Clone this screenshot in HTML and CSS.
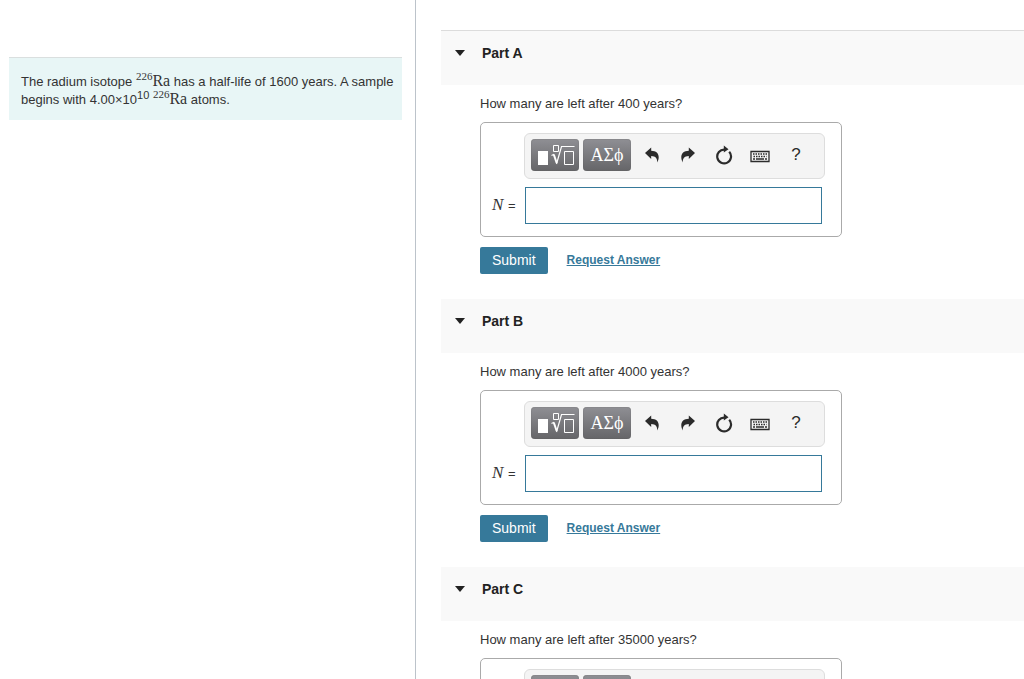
FILE: index.html
```
<!DOCTYPE html>
<html lang="en">
<head>
  <meta charset="utf-8">
  <meta name="viewport" content="width=device-width, initial-scale=1.0">
  <title>Radium half-life</title>
  <link rel="stylesheet" href="styles.css">
</head>
<body>

  <!-- shared icons -->
  <svg class="sprite" aria-hidden="true">
    <symbol id="i-template" viewBox="0 0 48 32">
      <path d="M7 12h10v14H7z" fill="#fff"/>
      <path d="M22.5 6.500h5v6h-5zM33.500 12.500h9v13h-9z" fill="none" stroke="#fff"/>
      <path d="M20.500 16.500l2.500-1.200M25.500 25l5-17.500H43.500" fill="none" stroke="#fff" stroke-width="1.200"/>
      <path d="M22.800 15.500l2.900 8.500" fill="none" stroke="#fff" stroke-width="2"/>
    </symbol>
    <symbol id="i-undo" viewBox="0 0 16 16">
      <path d="M1 6L7.200.5v3.200c4.900.2 7.600 2.600 7.500 6.600 0 1.700-.4 3.300-1.500 5.200.2-4.200-1.500-6.300-6-6.500v3z"/>
    </symbol>
    <symbol id="i-redo" viewBox="0 0 16 16">
      <path d="M15 6L8.800.5v3.200C3.900 3.900 1.200 6.300 1.300 10.300c0 1.700.4 3.300 1.500 5.200-.2-4.200 1.500-6.300 6-6.500v3z"/>
    </symbol>
    <symbol id="i-reset" viewBox="0 0 18 20">
      <path d="M14.200 6.800A6.900 6.900 0 1 1 9.500 4.600" fill="none" stroke="currentColor" stroke-width="2.200"/>
      <path d="M8.800.5L13.500 4.300 8.800 7.500z"/>
    </symbol>
    <symbol id="i-keyboard" viewBox="0 0 20 14">
      <path d="M1 1.500h18v10H1z" fill="none" stroke="currentColor" stroke-width="1.300"/>
      <path d="M3 4h14M3.500 6.500h13" fill="none" stroke="currentColor" stroke-width="1.500" stroke-dasharray="1.500 1"/>
      <path d="M3 9h2M6 9h8M15 9h2" fill="none" stroke="currentColor" stroke-width="1.500"/>
    </symbol>
  </svg>

  <div class="page">
    <aside class="intro">
      <p class="problem">The radium isotope <span class="tex"><sup>226</sup>Ra</span> has a half-life of 1600 years. A sample begins with 4.00×10<sup>10</sup> <span class="tex"><sup>226</sup>Ra</span> atoms.</p>
    </aside>

    <main class="parts">
      <section class="part">
        <h2 class="part-title"><button class="toggle" type="button" aria-expanded="true">Part A</button></h2>
        <form class="part-body">
          <p class="question">How many are left after 400 years?</p>
          <div class="answer">
            <div class="toolbar">
              <button class="key" type="button" aria-label="Templates"><svg><use href="#i-template"/></svg></button>
              <button class="key" type="button">ΑΣϕ</button>
              <span class="tools">
                <button class="tool" type="button" aria-label="Undo"><svg width="16" height="16"><use href="#i-undo"/></svg></button>
                <button class="tool" type="button" aria-label="Redo"><svg width="16" height="16"><use href="#i-redo"/></svg></button>
                <button class="tool" type="button" aria-label="Reset"><svg width="18" height="20"><use href="#i-reset"/></svg></button>
                <button class="tool" type="button" aria-label="Keyboard shortcuts"><svg class="low" width="20" height="14"><use href="#i-keyboard"/></svg></button>
                <button class="tool" type="button" aria-label="Help">?</button>
              </span>
            </div>
            <label class="symbol" for="answer-a"><i>N</i> =</label>
            <input class="field" id="answer-a" type="text">
          </div>
          <div class="actions">
            <button class="submit" type="submit">Submit</button>
            <a class="request" href="#">Request Answer</a>
          </div>
        </form>
      </section>

      <section class="part">
        <h2 class="part-title"><button class="toggle" type="button" aria-expanded="true">Part B</button></h2>
        <form class="part-body">
          <p class="question">How many are left after 4000 years?</p>
          <div class="answer">
            <div class="toolbar">
              <button class="key" type="button" aria-label="Templates"><svg><use href="#i-template"/></svg></button>
              <button class="key" type="button">ΑΣϕ</button>
              <span class="tools">
                <button class="tool" type="button" aria-label="Undo"><svg width="16" height="16"><use href="#i-undo"/></svg></button>
                <button class="tool" type="button" aria-label="Redo"><svg width="16" height="16"><use href="#i-redo"/></svg></button>
                <button class="tool" type="button" aria-label="Reset"><svg width="18" height="20"><use href="#i-reset"/></svg></button>
                <button class="tool" type="button" aria-label="Keyboard shortcuts"><svg class="low" width="20" height="14"><use href="#i-keyboard"/></svg></button>
                <button class="tool" type="button" aria-label="Help">?</button>
              </span>
            </div>
            <label class="symbol" for="answer-b"><i>N</i> =</label>
            <input class="field" id="answer-b" type="text">
          </div>
          <div class="actions">
            <button class="submit" type="submit">Submit</button>
            <a class="request" href="#">Request Answer</a>
          </div>
        </form>
      </section>

      <section class="part">
        <h2 class="part-title"><button class="toggle" type="button" aria-expanded="true">Part C</button></h2>
        <form class="part-body">
          <p class="question">How many are left after 35000 years?</p>
          <div class="answer">
            <div class="toolbar">
              <button class="key" type="button" aria-label="Templates"><svg><use href="#i-template"/></svg></button>
              <button class="key" type="button">ΑΣϕ</button>
              <span class="tools">
                <button class="tool" type="button" aria-label="Undo"><svg width="16" height="16"><use href="#i-undo"/></svg></button>
                <button class="tool" type="button" aria-label="Redo"><svg width="16" height="16"><use href="#i-redo"/></svg></button>
                <button class="tool" type="button" aria-label="Reset"><svg width="18" height="20"><use href="#i-reset"/></svg></button>
                <button class="tool" type="button" aria-label="Keyboard shortcuts"><svg class="low" width="20" height="14"><use href="#i-keyboard"/></svg></button>
                <button class="tool" type="button" aria-label="Help">?</button>
              </span>
            </div>
            <label class="symbol" for="answer-c"><i>N</i> =</label>
            <input class="field" id="answer-c" type="text">
          </div>
          <div class="actions">
            <button class="submit" type="submit">Submit</button>
            <a class="request" href="#">Request Answer</a>
          </div>
        </form>
      </section>
    </main>
  </div>

</body>
</html>
```
FILE: styles.css
```
* {
  box-sizing: border-box;
}
body,
h2,
p {
  margin: 0;
}
body {
  background: #fff;
  color: #333;
  font: 13px/18px "Liberation Sans", Arial, sans-serif;
}
button,
input {
  margin: 0;
  padding: 0;
  font: inherit;
  color: inherit;
}
button {
  border: 0;
  background: none;
  cursor: pointer;
}
svg {
  fill: currentColor;
}
.sprite {
  display: none;
}

/* two panes, each scrolls on its own */
.page {
  display: grid;
  grid-template-columns: 13fr 19fr;
  height: 100vh;
}
.intro,
.parts {
  overflow-y: auto;
  scrollbar-width: none;
}
.intro {
  padding: 57px 13px 0 9px;
  border-right: 1px solid #bcc3ca;
}
.problem {
  padding: 15px 2px 11px 12px;
  border-top: 1px solid #dadfdf;
  background: #e8f6f6;
}
sup {
  font-size: 11px;
  line-height: 0;
}
.tex {
  font-family: "Liberation Serif", "Times New Roman", serif;
  font-size: 16px;
  line-height: 0;
}

/* parts */
.parts {
  padding: 30px 0 0 25px;
}
.part:first-child .part-title {
  border-top: 1px solid #dcdcdc;
}
.part-title {
  background: #f9f9f9;
  font-size: 14px;
}
.toggle {
  display: flex;
  align-items: center;
  gap: 17px;
  width: 100%;
  padding: 13px 13px 23px;
  color: #222;
  font-weight: bold;
  text-align: left;
}
.toggle::before {
  content: "";
  border: 5px solid transparent;
  border-top: 6px solid #222;
  border-bottom: 0;
  margin-left: 1px;
}
.part-body {
  padding: 10px 39px 25px;
}
.answer {
  display: grid;
  grid-template-columns: 33px 1fr;
  align-items: center;
  row-gap: 8px;
  max-width: 362px;
  margin: 9px 0 10px;
  padding: 10px 16px 12px 10px;
  border: 1px solid #aaa;
  border-radius: 5px;
}
.toolbar {
  grid-column: 2;
  display: flex;
  gap: 4px;
  padding: 5px 6px 7px;
  border: 1px solid #ddd;
  border-radius: 6px;
  background: #f4f4f4;
}
.key {
  width: 48px;
  height: 32px;
  border-radius: 4px;
  background: linear-gradient(#8f8f94, #656568);
  box-shadow: inset 0 0 1px #555;
  color: #fff;
  font: 18px/30px "Liberation Serif", "Times New Roman", serif;
}
.key svg {
  display: block;
  width: 48px;
  height: 32px;
}
.tools {
  display: flex;
  margin-left: -1px;
}
.tool {
  display: flex;
  align-items: center;
  justify-content: center;
  width: 36px;
  height: 32px;
  color: #2b2b2b;
  font-size: 17px;
}
.low {
  margin-top: 4px;
}
.symbol {
  padding-left: 1px;
}
.symbol i {
  margin-right: 1px;
  font-family: "Liberation Serif", "Times New Roman", serif;
  font-size: 17px;
}
.field {
  height: 37px;
  margin: 0 3px 0 1px;
  padding: 0 8px;
  border: 1px solid #36799a;
  border-radius: 0;
  background: #fff;
}
.actions {
  display: flex;
  gap: 19px;
}
.submit {
  padding: 0 12px;
  border-radius: 2px;
  background: #36799a;
  color: #fff;
  font-size: 14px;
  line-height: 27px;
}
.request {
  color: #36799a;
  font-size: 12px;
  font-weight: bold;
  line-height: 26px;
}
```
